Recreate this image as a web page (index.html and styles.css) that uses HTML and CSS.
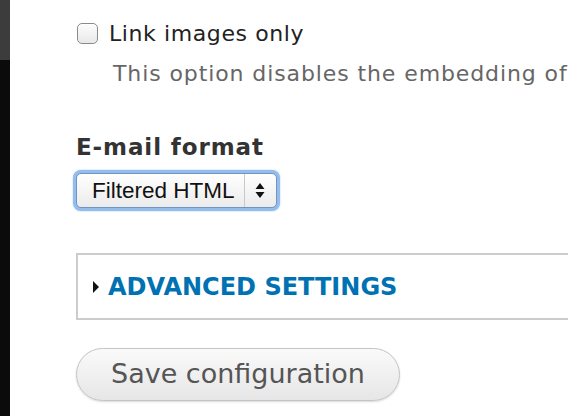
FILE: index.html
```html
<!DOCTYPE html>
<html>
<head>
<meta charset="utf-8">
<link rel="stylesheet" href="styles.css">
</head>
<body>
<div class="page">
  <div class="sidebar"><div class="sidebar-top"></div></div>
  <div class="content">
    <label class="check-row">
      <span class="checkbox"></span>
      <span class="check-label">Link images only</span>
    </label>
    <div class="description">This option disables the embedding of</div>
    <div class="field-title">E-mail format</div>
    <div class="select-wrap">
      <div class="select">
        <span class="select-text">Filtered HTML</span>
        <span class="select-arrows">
          <svg width="10" height="17" viewBox="0 0 10 17"><path d="M5 1 L9.5 7 H0.5 Z M5 16 L9.5 10 H0.5 Z" fill="#111"/></svg>
        </span>
      </div>
    </div>
    <div class="fieldset">
      <span class="triangle"></span>
      <span class="legend">ADVANCED SETTINGS</span>
    </div>
    <div class="button">Save configuration</div>
  </div>
</div>
</body>
</html>
```
FILE: styles.css
```css
html, body {
  margin: 0;
  padding: 0;
  background: #fff;
  overflow: hidden;
}
.page {
  display: flex;
  width: 568px;
  height: 416px;
  overflow: hidden;
}
.sidebar {
  width: 10px;
  flex: none;
  background: #0b0b0b;
}
.sidebar-top {
  height: 60px;
  background: #3c3c3c;
}
.content {
  flex: 1;
  padding-left: 66px;
  font-family: "DejaVu Sans", Verdana, sans-serif;
  white-space: nowrap;
  min-width: 0;
}
.check-row {
  display: flex;
  align-items: center;
  gap: 11px;
  margin-top: 20px;
  height: 26px;
  padding-left: 1px;
}
.checkbox {
  flex: none;
  width: 19px;
  height: 19px;
  border: 1px solid #8a8a8a;
  border-radius: 5px;
  background: linear-gradient(#fdfdfd, #e8e8e8);
  box-shadow: inset 0 1px 0 #fff;
}
.check-label {
  font-size: 22px;
  letter-spacing: 0.6px;
  color: #222;
}
.description {
  margin-top: 14px;
  margin-left: 37px;
  font-size: 22px;
  letter-spacing: 0.9px;
  color: #666;
  line-height: 28px;
}
.field-title {
  margin-top: 45px;
  font-size: 23px;
  letter-spacing: 0.9px;
  font-weight: bold;
  color: #333;
  line-height: 28px;
}
.select-wrap {
  margin-top: 9px;
  margin-left: -3px;
  display: inline-flex;
  padding: 3px;
  border-radius: 8px;
  background: #92bdec;
  box-shadow: 0 0 2px #a9cdf3;
}
.select {
  display: flex;
  align-items: center;
  height: 33px;
  border: 1px solid #7194c0;
  border-radius: 5px;
  background: linear-gradient(#ffffff, #ebebeb);
  font-family: "Liberation Sans", Arial, sans-serif;
  font-size: 22.5px;
  color: #111;
}
.select-text {
  padding: 0 9px 0 15px;
}
.select-arrows {
  display: flex;
  align-items: center;
  justify-content: center;
  width: 31px;
  height: 100%;
  border-left: 1px solid #c8c8c8;
}
.fieldset {
  margin-top: 42px;
  width: 560px;
  height: 63px;
  border: 2px solid #cccccc;
  display: flex;
  align-items: center;
  padding-left: 15px;
  box-sizing: content-box;
}
.triangle {
  flex: none;
  width: 0;
  height: 0;
  border-top: 6px solid transparent;
  border-bottom: 6px solid transparent;
  border-left: 6px solid #111;
  margin-right: 9px;
  margin-top: 1px;
}
.legend {
  font-size: 24px;
  font-weight: bold;
  color: #0071b3;
}
.button {
  margin-top: 28px;
  width: 324px;
  height: 53px;
  box-sizing: border-box;
  border: 1px solid #c4c4c4;
  border-radius: 27px;
  background: linear-gradient(#fafafa, #e6e6e6);
  box-shadow: 0 1px 2px rgba(0,0,0,0.15);
  display: flex;
  align-items: center;
  justify-content: center;
  font-size: 27px;
  color: #555;
  padding-bottom: 2px;
}
```
